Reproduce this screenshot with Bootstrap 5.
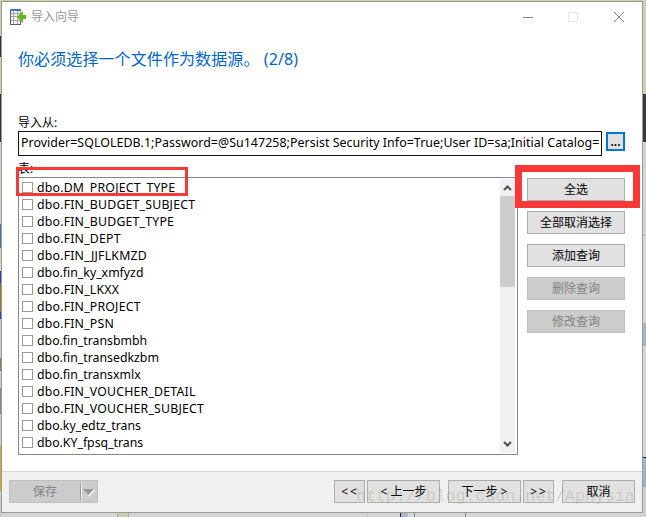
<!DOCTYPE html>
<html lang="zh-CN">
<head>
    <meta charset="UTF-8">
    <meta name="viewport" content="width=device-width, initial-scale=1.0">
    <title>导入向导</title>
    <link href="https://cdn.jsdelivr.net/npm/bootstrap@5.3.0/dist/css/bootstrap.min.css" rel="stylesheet">
    <style>
        body {
            width: 646px;
            height: 517px;
            overflow: hidden;
            padding: 1px 3px 4px 1px;
            font-family: "Noto Sans", "Noto Sans CJK SC", sans-serif;
            font-size: 12px;
            line-height: 17px;
            color: #000;
            /* desktop visible around the window */
            background:
                linear-gradient(90deg, transparent 117px, #aaa 117px 118px, #c8ccac 118px 128px, #aaa 128px 129px, transparent 129px 367px, #c5c5c5 367px 368px, transparent 368px 400px, #222 400px 401px, #a9b9d4 401px 408px, transparent 408px 414px, #888 414px 415px, transparent 415px 465px, #888 465px 466px, transparent 466px) 0 513px / 646px 4px no-repeat,
                linear-gradient(#d0d0b6 94px, #3a3a3c 94px 142px, #d4d4d4 142px 235px, #bbb 235px 236px, #d8d8d8 236px 323px, #a9b6ca 323px 346px, #d6d6d6 346px 457px, #222 457px 458px, #9db0cf 458px 487px, #d0d0d0 487px) 643px 0 / 3px 517px no-repeat,
                linear-gradient(#cdceb6 36px, #37322d 36px 57px, #cdceb6 57px 94px, #333 94px 142px, #d2d2d2 142px 224px, #4870b5 224px 248px, #d2d2d2 248px 271px, #2038dc 271px 283px, #94743a 283px 312px, #2038dc 312px 319px, #ccc 319px 358px, #8c7a6b 358px 371px, #ccc 371px 388px, #888 388px 414px, #ccc 414px 446px, #d2a72c 446px 491px, #ccc 491px) 0 0 / 2px 517px no-repeat,
                linear-gradient(#ccceb3 10px, #d5d5d5 10px);
        }
        .wizard {
            width: 642px;
            height: 512px;
            background: #fff;
            border: 1px solid #9b9c8c;
        }
        .title-bar {
            height: 29px;
            padding: 0 13px 0 8px;
            color: #999;
        }
        .title-bar svg { display: block; }
        .title-text { margin-left: 5px; }
        .wizard-title {
            height: 25px;
            margin: 16px 16px 0;
            font-size: 16px;
            line-height: 24px;
            letter-spacing: .1px;
            color: #0066cc;
        }
        .wizard-body { padding: 42px 16px 0 16px; }
        .source-field {
            width: 584px;
            height: 25px;
            padding: 0 2px;
            border: 1px solid #111;
            font-size: 12.4px;
            line-height: 22px;
            letter-spacing: .05px;
            white-space: nowrap;
            overflow: hidden;
        }
        .win-btn {
            height: 23px;
            padding: 0;
            border: 1px solid #adadad;
            border-radius: 0;
            background: #e1e1e1;
            color: #000;
            font-size: 12px;
            line-height: 21px;
        }
        .win-btn:disabled {
            background: #ccc;
            border-color: #bfbfbf;
            color: #838383;
            opacity: 1;
        }
        .browse-btn {
            width: 19px;
            height: 19px;
            margin-top: 1px;
            border: 2px solid #0078d7;
            line-height: 13px;
            font-weight: 600;
        }
        .table-label { height: 17px; margin-top: 4px; }
        .table-box {
            width: 500px;
            height: 278px;
            border: 1px solid #828790;
            padding: 1px 2px 1px 3px;
        }
        .table-row {
            height: 17px;
            gap: 4px;
            font-size: 12.3px;
            white-space: nowrap;
        }
        .upper-name { letter-spacing: .2px; }
        .tick-box {
            width: 11px;
            height: 11px;
            border: 1px solid #999;
            background: #fff;
        }
        .scroll-track { width: 15px; background: #f0f0f0; }
        .scroll-thumb { height: 91px; background: #cdcdcd; }
        .side-btns { width: 98px; gap: 10px; padding-top: 1px; margin-left: 9px; }
        .wizard-foot {
            height: 41px;
            padding: 8px 7px 0;
            border-top: 1px solid #d7d7d7;
            background: #f0f0f0;
        }
        .save-btn { width: 89px; }
        .save-arrow { width: 17px; height: 17px; border-left: 1px solid #999; box-shadow: inset 1px 0 #f2f2f2; }
        .jump-btn { width: 31px; letter-spacing: 2px; text-indent: 1px; }
        .step-btn { width: 73px; }
        .frame-mark { position: absolute; border: 3px solid #fb3838; }
        .frame-row { left: 16px; top: 167px; width: 172px; height: 29px; }
        .frame-all { left: 515px; top: 165px; width: 125px; height: 43px; border-width: 7px; }
        .watermark {
            position: absolute;
            left: 356px;
            top: 486px;
            font: 16.6px/22px "Liberation Mono", monospace;
            color: rgba(130, 130, 115, .26);
            white-space: nowrap;
        }
    </style>
</head>
<body class="position-relative">
    <div class="wizard d-flex flex-column">
        <div class="title-bar d-flex align-items-center">
            <svg width="16" height="16" viewBox="0 0 16 16" shape-rendering="crispEdges">
                <path d="M0 0h11v16H0z" fill="#a5a5a5"/>
                <path d="M0 2h1v14H0zM0 15h11v1H0zM10 12h1v4h-1z" fill="#606060"/>
                <path d="M0 0h11v2H0z" fill="#3e78bd"/>
                <path d="M1 2h2v2H1zM4 2h3v2H4zM8 2h2v2H8zM1 5h2v2H1zM4 5h3v2H4zM8 5h2v2H8zM1 8h2v3H1zM4 8h3v3H4zM8 8h2v3H8zM1 12h2v3H1zM4 12h3v3H4zM8 12h2v3H8z" fill="#f4f4f4"/>
                <path d="M7 8l6-6v4h3v4h-3v4z" fill="#63b51d" shape-rendering="auto"/>
            </svg>
            <span class="title-text">导入向导</span>
            <svg class="ms-auto" width="110" height="16" viewBox="0 0 110 16" fill="none">
                <path d="M4 8.5h10" stroke="#888"/>
                <path d="M49.5 3.5h9v9h-9z" stroke="#e5e5e5"/>
                <path d="M95 3l10 10M105 3L95 13" stroke="#888"/>
            </svg>
        </div>
        <div class="wizard-title">你必须选择一个文件作为数据源。 (2/8)</div>
        <div class="wizard-body flex-grow-1">
            <div>导入从:</div>
            <div class="d-flex gap-1">
                <div class="source-field">Provider=SQLOLEDB.1;Password=@Su147258;Persist Security Info=True;User ID=sa;Initial Catalog=</div>
                <button class="btn win-btn browse-btn">...</button>
            </div>
            <div class="table-label">表:</div>
            <div class="d-flex">
                <div class="table-box d-flex justify-content-between">
                    <div id="tableList"></div>
                    <div class="scroll-track d-flex flex-column">
                        <svg width="15" height="17" fill="none"><path d="M4 11l3.5-3.5L11 11" stroke="#505050" stroke-width="2"/></svg>
                        <div class="scroll-thumb"></div>
                        <svg class="mt-auto" width="15" height="17" fill="none"><path d="M4 6l3.5 3.5L11 6" stroke="#505050" stroke-width="2"/></svg>
                    </div>
                </div>
                <div class="side-btns d-flex flex-column">
                    <button class="btn win-btn">全选</button>
                    <button class="btn win-btn">全部取消选择</button>
                    <button class="btn win-btn">添加查询</button>
                    <button class="btn win-btn" disabled>删除查询</button>
                    <button class="btn win-btn" disabled>修改查询</button>
                </div>
            </div>
        </div>
        <div class="wizard-foot d-flex">
            <button class="btn win-btn save-btn d-flex align-items-center" disabled>
                <span class="flex-grow-1">保存</span>
                <span class="save-arrow d-flex">
                    <svg width="16" height="17"><path d="M7.5 13L13.5 7" fill="none" stroke="#fff" stroke-width="1.5"/><path d="M2 6h11l-5.5 6z" fill="#999"/></svg>
                </span>
            </button>
            <div class="d-flex ms-auto">
                <button class="btn win-btn jump-btn">&lt;&lt;</button>
                <button class="btn win-btn step-btn" style="margin-left: 2px">&lt; 上一步</button>
                <button class="btn win-btn step-btn ms-2">下一步 &gt;</button>
                <button class="btn win-btn jump-btn" style="margin-left: 2px">&gt;&gt;</button>
                <button class="btn win-btn step-btn ms-2">取消</button>
            </div>
        </div>
    </div>
    <div class="frame-mark frame-row"></div>
    <div class="frame-mark frame-all"></div>
    <div class="watermark">http://blog.csdn.net/Aphysia</div>

    <script src="https://cdn.jsdelivr.net/npm/bootstrap@5.3.0/dist/js/bootstrap.bundle.min.js"></script>
    <script>
        const tables = [
            'DM_PROJECT_TYPE', 'FIN_BUDGET_SUBJECT', 'FIN_BUDGET_TYPE', 'FIN_DEPT',
            'FIN_JJFLKMZD', 'fin_ky_xmfyzd', 'FIN_LKXX', 'FIN_PROJECT',
            'FIN_PSN', 'fin_transbmbh', 'fin_transedkzbm', 'fin_transxmlx',
            'FIN_VOUCHER_DETAIL', 'FIN_VOUCHER_SUBJECT', 'ky_edtz_trans', 'KY_fpsq_trans'
        ];

        // One row per table of the source database
        document.getElementById('tableList').innerHTML = tables.map(name => {
            const cls = name === name.toUpperCase() ? 'upper-name' : '';
            return `<div class="table-row d-flex align-items-center"><span class="tick-box"></span><span class="${cls}">dbo.${name}</span></div>`;
        }).join('');
    </script>
</body>
</html>
